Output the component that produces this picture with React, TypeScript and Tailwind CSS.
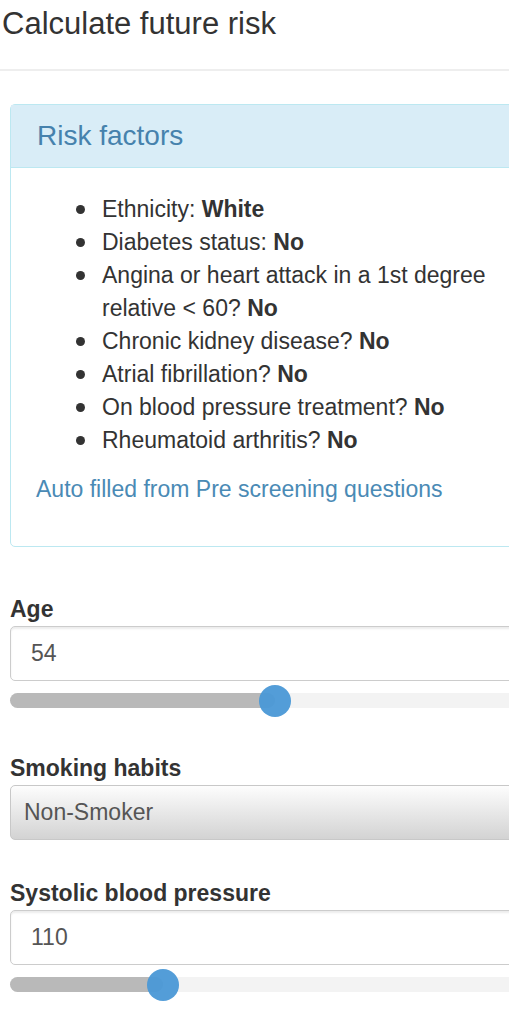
import React from 'react';

const factors: { label: string; value: string }[] = [
  { label: 'Ethnicity:', value: 'White' },
  { label: 'Diabetes status:', value: 'No' },
  { label: 'Angina or heart attack in a 1st degree relative < 60?', value: 'No' },
  { label: 'Chronic kidney disease?', value: 'No' },
  { label: 'Atrial fibrillation?', value: 'No' },
  { label: 'On blood pressure treatment?', value: 'No' },
  { label: 'Rheumatoid arthritis?', value: 'No' },
];

function Slider({ percent }: { percent: number }) {
  return (
    <div className="relative mt-[12px] h-[15px] w-full">
      <div className="absolute inset-0 rounded-full bg-[#f3f3f3]" />
      <div className="absolute left-0 top-0 h-full rounded-full bg-[#b9b9b9]" style={{ width: `${percent}%` }} />
      <div
        className="absolute top-1/2 h-[32px] w-[32px] -translate-x-1/2 -translate-y-1/2 rounded-full bg-[#4a98d6] opacity-95"
        style={{ left: `${percent}%` }}
      />
    </div>
  );
}

function NumberField({ label, value, percent }: { label: string; value: string; percent: number }) {
  return (
    <div>
      <div className="text-[23px] font-bold leading-[28px] text-[#333]">{label}</div>
      <div className="mt-[3px] flex h-[55px] items-center rounded-[5px] border border-[#ccc] bg-white px-[20px] text-[23px] text-[#555] shadow-[inset_0_2px_2px_rgba(0,0,0,0.08)]">
        {value}
      </div>
      <Slider percent={percent} />
    </div>
  );
}

export default function App() {
  return (
    <div className="w-[509px] overflow-hidden bg-white font-['Liberation_Sans',Arial,sans-serif] text-[#333]">
      <div className="w-[560px]">
        {/* Page title */}
        <h1 className="pl-[2px] pt-[7px] text-[31px] leading-[34px] text-[#333]">Calculate future risk</h1>
        <div className="mt-[28px] border-t-2 border-[#eee]" />

        <div className="pl-[10px]">
          {/* Risk factors panel */}
          <div className="mt-[33px] rounded-[5px] border border-[#bce8f1]">
            <div className="flex h-[63px] items-center border-b border-[#bce8f1] bg-[#d9edf7] px-[26px] text-[28px] text-[#4682ad]">
              Risk factors
            </div>
            <div className="px-[25px] pb-[40px] pt-[25px]">
              <ul className="pl-[40px] text-[23px] leading-[33px] text-[#333]">
                {factors.map((f) => (
                  <li key={f.label} className="flex">
                    <span className="flex h-[33px] w-[26px] shrink-0 items-center">
                      <span className="h-[9px] w-[9px] rounded-full bg-[#333]" />
                    </span>
                    <span>
                      {f.label} <strong>{f.value}</strong>
                    </span>
                  </li>
                ))}
              </ul>
              <div className="mt-[16px] text-[23px] leading-[33px] text-[#4a8ab5]">
                Auto filled from Pre screening questions
              </div>
            </div>
          </div>

          {/* Form fields */}
          <div className="mt-[48px]">
            <NumberField label="Age" value="54" percent={48.2} />

            <div className="mt-[46px]">
              <div className="text-[23px] font-bold leading-[28px] text-[#333]">Smoking habits</div>
              <div className="mt-[3px] flex h-[55px] items-center rounded-[5px] border border-[#c8c8c8] bg-gradient-to-b from-[#fdfdfd] to-[#d3d3d3] px-[13px] text-[23px] text-[#555]">
                Non-Smoker
              </div>
            </div>

            <div className="mt-[39px]">
              <NumberField label="Systolic blood pressure" value="110" percent={27.8} />
            </div>
          </div>
          <div className="h-[40px]" />
        </div>
      </div>
    </div>
  );
}
